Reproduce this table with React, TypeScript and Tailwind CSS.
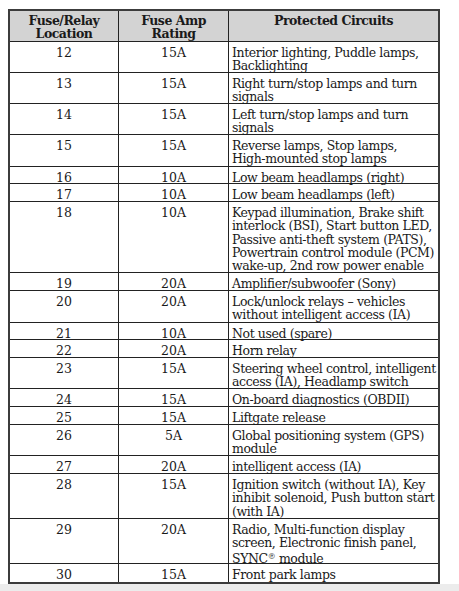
import React from "react";

type Row = {
  loc: string;
  amp: string;
  lines: React.ReactNode[];
  h: string;
};

const rows: Row[] = [
  { loc: "12", amp: "15A", lines: ["Interior lighting, Puddle lamps,", "Backlighting"], h: "h-[31px]" },
  { loc: "13", amp: "15A", lines: ["Right turn/stop lamps and turn", "signals"], h: "h-[31px]" },
  { loc: "14", amp: "15A", lines: ["Left turn/stop lamps and turn", "signals"], h: "h-[31px]" },
  { loc: "15", amp: "15A", lines: ["Reverse lamps, Stop lamps,", "High-mounted stop lamps"], h: "h-[32px]" },
  { loc: "16", amp: "10A", lines: ["Low beam headlamps (right)"], h: "h-[17px]" },
  { loc: "17", amp: "10A", lines: ["Low beam headlamps (left)"], h: "h-[18px]" },
  {
    loc: "18",
    amp: "10A",
    lines: [
      "Keypad illumination, Brake shift",
      "interlock (BSI), Start button LED,",
      "Passive anti-theft system (PATS),",
      "Powertrain control module (PCM)",
      "wake-up, 2nd row power enable",
    ],
    h: "h-[71px]",
  },
  { loc: "19", amp: "20A", lines: ["Amplifier/subwoofer (Sony)"], h: "h-[18px]" },
  { loc: "20", amp: "20A", lines: ["Lock/unlock relays – vehicles", "without intelligent access (IA)"], h: "h-[32px]" },
  { loc: "21", amp: "10A", lines: ["Not used (spare)"], h: "h-[17px]" },
  { loc: "22", amp: "20A", lines: ["Horn relay"], h: "h-[18px]" },
  { loc: "23", amp: "15A", lines: ["Steering wheel control, intelligent", "access (IA), Headlamp switch"], h: "h-[31px]" },
  { loc: "24", amp: "15A", lines: ["On-board diagnostics (OBDII)"], h: "h-[18px]" },
  { loc: "25", amp: "15A", lines: ["Liftgate release"], h: "h-[18px]" },
  { loc: "26", amp: "5A", lines: ["Global positioning system (GPS)", "module"], h: "h-[31px]" },
  { loc: "27", amp: "20A", lines: ["intelligent access (IA)"], h: "h-[18px]" },
  {
    loc: "28",
    amp: "15A",
    lines: ["Ignition switch (without IA), Key", "inhibit solenoid, Push button start", "(with IA)"],
    h: "h-[45px]",
  },
  {
    loc: "29",
    amp: "20A",
    lines: [
      "Radio, Multi-function display",
      "screen, Electronic finish panel,",
      <>
        SYNC<span className="text-[8px] align-[4px]">®</span> module
      </>,
    ],
    h: "h-[45px]",
  },
  { loc: "30", amp: "15A", lines: ["Front park lamps"], h: "h-[18px]" },
];

const App: React.FC = () => {
  return (
    <div className="w-[459px] h-[591px] bg-white flex flex-col text-[#1a1a1a] font-['DejaVu_Serif',serif] text-[12.5px] leading-[13px]">
      <div className="flex-1 pt-[9px] pl-[8px]">
        <div className="w-[432px] border-2 border-[#3c3c3c] flex flex-col">
          <div className="h-[31px] flex bg-[#d3d3d3] border-b border-[#222] font-bold tracking-[-0.5px] text-center">
            <div className="w-[109px] border-r border-[#222] pt-[3px]">
              Fuse/Relay
              <br />
              Location
            </div>
            <div className="w-[110px] border-r border-[#222] pt-[3px]">
              Fuse Amp
              <br />
              Rating
            </div>
            <div className="w-[209px] pt-[3px]">Protected Circuits</div>
          </div>
          {rows.map((r, idx) => (
            <div
              key={r.loc}
              className={`${r.h} flex leading-[13.3px] ${idx < rows.length - 1 ? "border-b border-[#222]" : ""}`}
            >
              <div className="w-[109px] border-r border-[#222] pt-[4px] text-center">{r.loc}</div>
              <div className="w-[110px] border-r border-[#222] pt-[4px] text-center">{r.amp}</div>
              <div className="w-[209px] pt-[4px] pl-[3px] whitespace-nowrap tracking-[-0.4px]">
                {r.lines.map((l, i) => (
                  <div key={i}>{l}</div>
                ))}
              </div>
            </div>
          ))}
        </div>
      </div>
      <div className="h-[8px] bg-[#ececec]" />
    </div>
  );
};

export default App;
